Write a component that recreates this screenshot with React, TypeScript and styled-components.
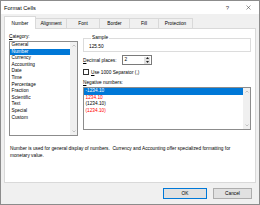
import styled, { createGlobalStyle } from "styled-components";

const GlobalStyle = createGlobalStyle`
  html, body {
    margin: 0;
    padding: 0;
  }
  body {
    width: 260px;
    height: 205px;
    overflow: hidden;
    font-family: "Liberation Sans", Arial, sans-serif;
    color: #000;
  }
`;

const Window = styled.div`
  width: 260px;
  height: 205px;
  box-sizing: border-box;
  border: 1px solid #8c8c8c;
  background: #f0f0f0;
  display: flex;
  flex-direction: column;
`;

const TitleBar = styled.div`
  height: 13px;
  background: #fff;
  display: flex;
  align-items: center;
  padding-left: 3px;
`;

const Title = styled.div`
  flex: 1;
  font-size: 5.6px;
`;

const TitleButton = styled.div`
  width: 21px;
  display: flex;
  align-items: center;
  justify-content: center;
  font-size: 6px;
  color: #444;
`;

const Body = styled.div`
  flex: 1;
  display: flex;
  flex-direction: column;
  padding: 2px 3px 0 3px;
`;

const Tabs = styled.div`
  display: flex;
  align-items: flex-end;
  height: 13px;
  position: relative;
  z-index: 1;
`;

const Tab = styled.div<{ $w: number; $active?: boolean }>`
  width: ${p => p.$w}px;
  height: ${p => (p.$active ? 13 : 11)}px;
  box-sizing: border-box;
  border: 1px solid #d9d9d9;
  border-left-width: ${p => (p.$active ? 1 : 0)}px;
  border-bottom: ${p => (p.$active ? "none" : "1px solid #d9d9d9")};
  background: ${p => (p.$active ? "#fff" : "#f0f0f0")};
  font-size: 4.75px;
  display: flex;
  align-items: center;
  justify-content: center;
  &:first-child {
    border-left-width: 1px;
  }
`;

const Panel = styled.div`
  height: 155px;
  box-sizing: border-box;
  background: #fff;
  border: 1px solid #d9d9d9;
  margin-top: -1px;
  padding: 4px 4px 0 4px;
  display: flex;
  flex-direction: column;
  font-size: 4.75px;
`;

const TopRow = styled.div`
  display: flex;
  gap: 5px;
`;

const LeftCol = styled.div`
  width: 69px;
  display: flex;
  flex-direction: column;
`;

const RightCol = styled.div`
  flex: 1;
  display: flex;
  flex-direction: column;
`;

const Label = styled.div<{ $mt?: number }>`
  height: 7px;
  line-height: 7px;
  margin-top: ${p => p.$mt ?? 0}px;
  white-space: nowrap;
`;

const ListBox = styled.div<{ $h: number; $mt?: number }>`
  height: ${p => p.$h}px;
  margin-top: ${p => p.$mt ?? 0}px;
  box-sizing: border-box;
  border: 1px solid #8c8c8c;
  background: #fff;
  display: flex;
`;

const Items = styled.div`
  flex: 1;
  display: flex;
  flex-direction: column;
`;

const Item = styled.div<{ $selected?: boolean; $red?: boolean }>`
  height: 6.6px;
  line-height: 6.6px;
  padding-left: 1.5px;
  white-space: nowrap;
  background: ${p => (p.$selected ? "#0078d7" : "transparent")};
  color: ${p => (p.$selected ? "#fff" : p.$red ? "#ff0000" : "#000")};
`;

const ScrollBar = styled.div`
  width: 7px;
  background: #f0f0f0;
  display: flex;
  flex-direction: column;
  justify-content: space-between;
  align-items: center;
  padding: 2px 0;
`;

const Fieldset = styled.fieldset`
  margin: 2px 0 0 0;
  padding: 2px 0 2px 5px;
  border: 1px solid #dcdcdc;
  height: 17px;
  box-sizing: border-box;
`;

const Legend = styled.legend`
  padding: 0 1px;
  margin-left: 2px;
  line-height: 6px;
`;

const SampleValue = styled.div`
  line-height: 6px;
  margin-top: 1px;
`;

const FieldRow = styled.div<{ $mt: number }>`
  display: flex;
  align-items: center;
  margin-top: ${p => p.$mt}px;
  white-space: nowrap;
`;

const Spin = styled.div`
  margin-left: 5px;
  width: 30px;
  height: 10px;
  box-sizing: border-box;
  border: 1px solid #7a7a7a;
  display: flex;
  background: #fff;
`;

const SpinValue = styled.div`
  flex: 1;
  padding-left: 2px;
  line-height: 8px;
`;

const SpinButtons = styled.div`
  width: 6px;
  display: flex;
  flex-direction: column;
  gap: 0.5px;
  padding: 0.5px;
`;

const SpinButton = styled.div`
  flex: 1;
  background: #e1e1e1;
  display: flex;
  align-items: center;
  justify-content: center;
`;

const CheckBox = styled.div`
  width: 6px;
  height: 6px;
  box-sizing: border-box;
  border: 1px solid #333;
  background: #fff;
  margin-right: 2px;
`;

const Description = styled.div`
  margin-top: 10px;
  margin-left: 1px;
  line-height: 6.6px;
  white-space: nowrap;
`;

const Footer = styled.div`
  flex: 1;
  display: flex;
  justify-content: flex-end;
  align-items: flex-start;
  gap: 6px;
  padding: 5px 4px 0 0;
`;

const Button = styled.div<{ $w: number; $default?: boolean }>`
  width: ${p => p.$w}px;
  height: 11px;
  box-sizing: border-box;
  background: #e1e1e1;
  border: 1px solid ${p => (p.$default ? "#0078d7" : "#adadad")};
  font-size: 4.75px;
  display: flex;
  align-items: center;
  justify-content: center;
`;

const Chevron = ({ up, color = "#a3a3a3" }: { up?: boolean; color?: string }) => (
  <svg width="4" height="3" viewBox="0 0 8 5">
    <path
      d={up ? "M1 4.5 L4 1.5 L7 4.5" : "M1 0.5 L4 3.5 L7 0.5"}
      fill="none"
      stroke={color}
      strokeWidth="1.2"
    />
  </svg>
);

const Triangle = ({ up }: { up?: boolean }) => (
  <svg width="3" height="2" viewBox="0 0 6 4">
    <path d={up ? "M0 4 L3 0 L6 4 Z" : "M0 0 L3 4 L6 0 Z"} fill="#222" />
  </svg>
);

const tabs = [
  { label: "Number", w: 32 },
  { label: "Alignment", w: 31 },
  { label: "Font", w: 33 },
  { label: "Border", w: 30 },
  { label: "Fill", w: 29 },
  { label: "Protection", w: 34 },
];

const categories = [
  "General",
  "Number",
  "Currency",
  "Accounting",
  "Date",
  "Time",
  "Percentage",
  "Fraction",
  "Scientific",
  "Text",
  "Special",
  "Custom",
];

const negatives = [
  { text: "-1234.10", red: false },
  { text: "1234.10", red: true },
  { text: "(1234.10)", red: false },
  { text: "(1234.10)", red: true },
];

export default function App() {
  return (
    <>
      <GlobalStyle />
      <Window>
        <TitleBar>
          <Title>Format Cells</Title>
          <TitleButton>?</TitleButton>
          <TitleButton>
            <svg width="5" height="5" viewBox="0 0 10 10">
              <path d="M1 1 L9 9 M9 1 L1 9" stroke="#333" strokeWidth="1" />
            </svg>
          </TitleButton>
        </TitleBar>
        <Body>
          <Tabs>
            {tabs.map((t, i) => (
              <Tab key={t.label} $w={t.w} $active={i === 0}>
                {t.label}
              </Tab>
            ))}
          </Tabs>
          <Panel>
            <TopRow>
              <LeftCol>
                <Label>
                  <u>C</u>ategory:
                </Label>
                <ListBox $h={95} $mt={1}>
                  <Items>
                    {categories.map(c => (
                      <Item key={c} $selected={c === "Number"}>
                        {c}
                      </Item>
                    ))}
                  </Items>
                  <ScrollBar>
                    <Chevron up />
                    <Chevron />
                  </ScrollBar>
                </ListBox>
              </LeftCol>
              <RightCol>
                <Fieldset>
                  <Legend>Sample</Legend>
                  <SampleValue>125.50</SampleValue>
                </Fieldset>
                <FieldRow $mt={3}>
                  <span>
                    <u>D</u>ecimal places:
                  </span>
                  <Spin>
                    <SpinValue>2</SpinValue>
                    <SpinButtons>
                      <SpinButton>
                        <Triangle up />
                      </SpinButton>
                      <SpinButton>
                        <Triangle />
                      </SpinButton>
                    </SpinButtons>
                  </Spin>
                </FieldRow>
                <FieldRow $mt={4}>
                  <CheckBox />
                  <span>
                    <u>U</u>se 1000 Separator (,)
                  </span>
                </FieldRow>
                <Label $mt={4}>
                  <u>N</u>egative numbers:
                </Label>
                <ListBox $h={43} $mt={1}>
                  <Items>
                    {negatives.map((n, i) => (
                      <Item key={i} $selected={i === 0} $red={n.red}>
                        {n.text}
                      </Item>
                    ))}
                  </Items>
                  <ScrollBar>
                    <Chevron up />
                    <Chevron />
                  </ScrollBar>
                </ListBox>
              </RightCol>
            </TopRow>
            <Description>
              Number is used for general display of numbers.&nbsp; Currency and Accounting offer
              specialized formatting for
              <br />
              monetary value.
            </Description>
          </Panel>
          <Footer>
            <Button $w={44} $default>
              OK
            </Button>
            <Button $w={39}>Cancel</Button>
          </Footer>
        </Body>
      </Window>
    </>
  );
}
